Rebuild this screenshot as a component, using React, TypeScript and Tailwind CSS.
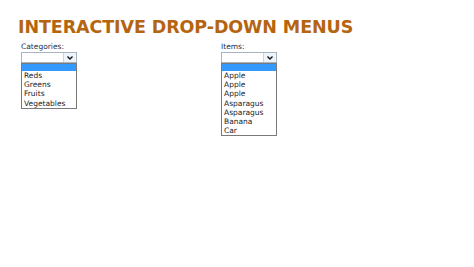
import React from 'react';

const font = { fontFamily: '"DejaVu Sans", Verdana, sans-serif' };

type DropProps = { label: string; options: string[] };

const Dropdown: React.FC<DropProps> = ({ label, options }) => (
  <div className="flex flex-col w-[56px]">
    <span className="text-[7.5px] leading-[10px] text-[#1f2d4a]">{label}</span>
    <div className="flex h-[11px] border border-[#a9b4c2] bg-white">
      <div className="flex-1" />
      <div className="w-[13px] flex items-center justify-center bg-[#eef4fb] border-l border-[#c7d4e3]">
        <svg width="6" height="4" viewBox="0 0 6 4">
          <path d="M0.5 0.5 L3 3 L5.5 0.5" stroke="#111" strokeWidth="1.4" fill="none" />
        </svg>
      </div>
    </div>
    <div className="flex flex-col border border-[#7a7a7a] bg-white">
      <div className="h-[7px] bg-[#3399ff]" />
      {options.map((o, i) => (
        <span key={i} className="px-[2px] text-[7.5px] leading-[9.2px] text-[#222]">
          {o}
        </span>
      ))}
    </div>
  </div>
);

export default function App() {
  return (
    <div className="w-[474px] h-[267px] bg-white pl-[18px] pt-[16px]" style={font}>
      <h1 className="text-[17.5px] leading-[22px] font-bold text-[#b5640f] tracking-[-0.1px]">
        INTERACTIVE DROP-DOWN MENUS
      </h1>
      <div className="flex gap-[144px] pl-[3px] mt-[4px]">
        <Dropdown label="Categories:" options={['Reds', 'Greens', 'Fruits', 'Vegetables']} />
        <Dropdown
          label="Items:"
          options={['Apple', 'Apple', 'Apple', 'Asparagus', 'Asparagus', 'Banana', 'Car']}
        />
      </div>
    </div>
  );
}
